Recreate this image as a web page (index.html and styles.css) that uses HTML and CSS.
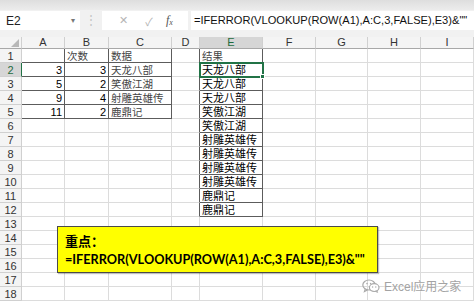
FILE: index.html
```html
<!DOCTYPE html>
<html lang="zh">
<head>
    <meta charset="UTF-8">
    <title>IFERROR VLOOKUP</title>
    <link rel="stylesheet" href="styles.css">
</head>
<body>
    <div class="window">
        <div class="toolbar">
            <div class="formula-bar">
                <div class="name-box"><span>E2</span><span class="drop">&#9662;</span></div>
                <div class="grip">&#8942;</div>
                <div class="buttons">
                    <span class="cancel">&#10005;</span>
                    <span class="enter">&#10003;</span>
                    <span class="fx">f<sub>x</sub></span>
                </div>
                <div class="formula">=IFERROR(VLOOKUP(ROW(A1),A:C,3,FALSE),E3)&amp;""</div>
            </div>
        </div>

        <div class="sheet">
            <table class="grid">
                <colgroup>
                    <col class="c-row">
                    <col class="c-a">
                    <col class="c-b">
                    <col class="c-c">
                    <col class="c-d">
                    <col class="c-e">
                    <col class="c-f">
                    <col class="c-g">
                    <col class="c-h">
                    <col class="c-i">
                </colgroup>
                <tr class="head">
                    <th class="corner"><span class="tri"></span></th>
                    <th>A</th><th>B</th><th>C</th><th>D</th><th class="sel-col">E</th><th>F</th><th>G</th><th>H</th><th>I</th>
                </tr>
                <tr>
                    <th>1</th>
                    <td class="t"></td><td class="t soft">次数</td><td class="t soft">数据</td><td class="edge"></td><td class="t soft">结果</td><td></td><td></td><td></td><td></td>
                </tr>
                <tr>
                    <th class="sel-row">2</th>
                    <td class="t num">3</td><td class="t num">3</td><td class="t soft">天龙八部</td><td class="edge"></td><td class="t sel">天龙八部<span class="handle"></span></td><td></td><td></td><td></td><td></td>
                </tr>
                <tr>
                    <th>3</th>
                    <td class="t num">5</td><td class="t num">2</td><td class="t soft">笑傲江湖</td><td class="edge"></td><td class="t">天龙八部</td><td></td><td></td><td></td><td></td>
                </tr>
                <tr>
                    <th>4</th>
                    <td class="t num">9</td><td class="t num">4</td><td class="t soft">射雕英雄传</td><td class="edge"></td><td class="t">天龙八部</td><td></td><td></td><td></td><td></td>
                </tr>
                <tr>
                    <th>5</th>
                    <td class="t num">11</td><td class="t num">2</td><td class="t soft">鹿鼎记</td><td class="edge"></td><td class="t">笑傲江湖</td><td></td><td></td><td></td><td></td>
                </tr>
                <tr>
                    <th>6</th>
                    <td></td><td></td><td></td><td class="edge"></td><td class="t">笑傲江湖</td><td></td><td></td><td></td><td></td>
                </tr>
                <tr>
                    <th>7</th>
                    <td></td><td></td><td></td><td class="edge"></td><td class="t">射雕英雄传</td><td></td><td></td><td></td><td></td>
                </tr>
                <tr>
                    <th>8</th>
                    <td></td><td></td><td></td><td class="edge"></td><td class="t">射雕英雄传</td><td></td><td></td><td></td><td></td>
                </tr>
                <tr>
                    <th>9</th>
                    <td></td><td></td><td></td><td class="edge"></td><td class="t">射雕英雄传</td><td></td><td></td><td></td><td></td>
                </tr>
                <tr>
                    <th>10</th>
                    <td></td><td></td><td></td><td class="edge"></td><td class="t">射雕英雄传</td><td></td><td></td><td></td><td></td>
                </tr>
                <tr>
                    <th>11</th>
                    <td></td><td></td><td></td><td class="edge"></td><td class="t">鹿鼎记</td><td></td><td></td><td></td><td></td>
                </tr>
                <tr>
                    <th>12</th>
                    <td></td><td></td><td></td><td class="edge"></td><td class="t">鹿鼎记</td><td></td><td></td><td></td><td></td>
                </tr>
                <tr><th>13</th><td></td><td></td><td></td><td></td><td></td><td></td><td></td><td></td><td></td></tr>
                <tr><th>14</th><td></td><td></td><td></td><td></td><td></td><td></td><td></td><td></td><td></td></tr>
                <tr><th>15</th><td></td><td></td><td></td><td></td><td></td><td></td><td></td><td></td><td></td></tr>
                <tr><th>16</th><td></td><td></td><td></td><td></td><td></td><td></td><td></td><td></td><td></td></tr>
                <tr><th>17</th><td></td><td></td><td></td><td></td><td></td><td></td><td></td><td></td><td></td></tr>
                <tr><th>18</th><td></td><td></td><td></td><td></td><td></td><td></td><td></td><td></td><td></td></tr>
            </table>

            <!-- text box shape floating over the cells -->
            <div class="note">
                <div class="note-title">重点：</div>
                <div class="note-text">=IFERROR(VLOOKUP(ROW(A1),A:C,3,FALSE),E3)&amp;""</div>
            </div>

            <div class="mark">
                <svg class="wechat" width="18" height="14" viewBox="0 0 18 14">
                    <ellipse cx="7" cy="6" rx="6.2" ry="5" fill="none" stroke="#a9a9a9" stroke-width="1.2"/>
                    <path d="M3.2 10.2 L2.4 12.6 L5.4 10.9" fill="none" stroke="#a9a9a9" stroke-width="1.1"/>
                    <ellipse cx="12.2" cy="8.6" rx="4.8" ry="3.9" fill="#fff" stroke="#a9a9a9" stroke-width="1.2"/>
                    <path d="M14.8 11.8 L15.6 13.4 L13.4 12.3" fill="none" stroke="#a9a9a9" stroke-width="1"/>
                    <circle cx="5" cy="4.6" r="0.8" fill="#a9a9a9"/>
                    <circle cx="8.6" cy="4.6" r="0.8" fill="#a9a9a9"/>
                    <circle cx="10.6" cy="8" r="0.7" fill="#a9a9a9"/>
                    <circle cx="13.8" cy="8" r="0.7" fill="#a9a9a9"/>
                </svg>
                <span>Excel应用之家</span>
            </div>
        </div>
    </div>
</body>
</html>
```

FILE: styles.css
```css
body {
    margin: 0;
    background: #fff;
    font-family: "Liberation Sans", "Noto Sans CJK SC", sans-serif;
}

.window {
    width: 474px;
    height: 304px;
    overflow: hidden;
}

/* formula bar */

.toolbar {
    background: linear-gradient(#dedede 0, #ececec 10px, #f1f1f1 10px);
    padding: 11px 0 7px 0;
}

.formula-bar {
    display: flex;
    height: 19px;
}

.name-box {
    width: 80px;
    background: #fff;
    display: flex;
    align-items: center;
    justify-content: space-between;
    padding: 0 5px 0 6px;
    box-sizing: border-box;
    font-size: 12px;
    color: #222;
}

.name-box .drop {
    font-size: 8px;
    color: #777;
}

.grip {
    width: 22px;
    text-align: center;
    font-size: 12px;
    line-height: 19px;
    color: #c4c4c4;
}

.buttons {
    width: 86px;
    background: #fff;
    display: flex;
    align-items: center;
    padding-left: 8px;
    box-sizing: border-box;
}

.cancel,
.enter {
    width: 26px;
    font-size: 11px;
    color: #b5b5b5;
    text-align: center;
}

.fx {
    margin-left: 4px;
    font-family: "Liberation Serif", serif;
    font-style: italic;
    font-size: 12px;
    color: #555;
}

.fx sub {
    font-size: 8px;
    vertical-align: -1px;
}

.formula {
    flex: 1;
    margin-left: 3px;
    background: #fff;
    padding-left: 3px;
    font-size: 11.1px;
    line-height: 19px;
    color: #111;
    white-space: nowrap;
    overflow: hidden;
}

/* sheet grid */

.sheet {
    position: relative;
}

.grid {
    border-collapse: separate;
    border-spacing: 0;
    table-layout: fixed;
    width: 474px;
    font-size: 11px;
}

.c-row { width: 22px; }
.c-a { width: 43px; }
.c-b { width: 44px; }
.c-c { width: 63px; }
.c-d { width: 28px; }
.c-e { width: 63px; }
.c-f { width: 53px; }
.c-g { width: 52px; }
.c-h { width: 53px; }
.c-i { width: 53px; }

.grid th,
.grid td {
    box-sizing: border-box;
    padding: 0 2px;
    height: 14px;
    line-height: 12px;
    border-right: 1px solid #dcdcdc;
    border-bottom: 1px solid #dcdcdc;
    white-space: nowrap;
    overflow: hidden;
}

.grid th {
    background: #f4f4f4;
    color: #333;
    font-weight: normal;
    text-align: center;
    border-color: #d0d0d0;
}

.grid .head th {
    height: 12px;
    line-height: 11px;
    border-bottom-color: #a8a8a8;
}

.grid .corner {
    position: relative;
}

.tri {
    position: absolute;
    right: 2px;
    bottom: 1px;
    border-left: 8px solid transparent;
    border-bottom: 8px solid #b8b8b8;
}

.grid .sel-col {
    background: #d6d6d6;
    color: #1e6b3f;
    border-bottom: 1px solid #217346;
}

.grid .sel-row {
    background: #d6d6d6;
    color: #1e6b3f;
    border-right: 1px solid #217346;
}

.grid td {
    color: #000;
}

.grid td.t {
    border-right-color: #5c5c5c;
    border-bottom-color: #5c5c5c;
}

.grid td.edge {
    border-right-color: #5c5c5c;
}

.grid td.num {
    text-align: right;
}

.grid td.soft {
    color: #444;
    font-size: 10.5px;
}

.grid td.sel {
    position: relative;
    overflow: visible;
    outline: 2px solid #217346;
    outline-offset: -1px;
}

.handle {
    position: absolute;
    right: -3px;
    bottom: -3px;
    width: 5px;
    height: 5px;
    background: #217346;
    border: 1px solid #fff;
    box-sizing: border-box;
}

/* yellow text box */

.note {
    position: absolute;
    left: 57px;
    top: 189px;
    width: 321px;
    height: 47px;
    box-sizing: border-box;
    background: #ffff00;
    border: 1px solid #4a4a4a;
    box-shadow: 1px 1px 1px rgba(0, 0, 0, 0.25);
    padding: 4px 0 0 7px;
    font-weight: bold;
    color: #000;
}

.note-title {
    font-family: "Noto Sans CJK SC", sans-serif;
    font-size: 13px;
    line-height: 19px;
}

.note-text {
    font-family: "Lato", "Noto Sans CJK SC", sans-serif;
    font-size: 12.7px;
    line-height: 18px;
    white-space: nowrap;
}

/* watermark */

.mark {
    position: absolute;
    left: 362px;
    top: 240px;
    display: flex;
    align-items: center;
    gap: 4px;
    font-size: 12px;
    color: #a3a3a3;
    text-shadow: 0 0 2px #fff;
}
```
